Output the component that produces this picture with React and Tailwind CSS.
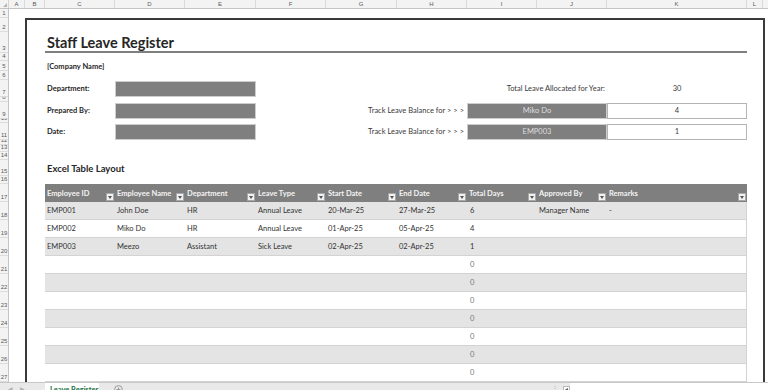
import React from "react";

const GRID = "grid grid-cols-[18px_70px_70px_71px_70px_71px_70px_70px_70px_140px_16px]";
const TGRID = "grid grid-cols-[70px_70px_71px_70px_71px_70px_70px_70px_140px]";

const colHeads = [
  ["A", "w-[16px]"],
  ["B", "w-[20px]"],
  ["C", "w-[70px]"],
  ["D", "w-[70px]"],
  ["E", "w-[71px]"],
  ["F", "w-[70px]"],
  ["G", "w-[71px]"],
  ["H", "w-[70px]"],
  ["I", "w-[70px]"],
  ["J", "w-[70px]"],
  ["K", "w-[140px]"],
  ["L", "w-[16px]"],
];

const rowHeads = [
  ["1", "h-[9px]"],
  ["2", "h-[14px]"],
  ["3", "h-[21px]"],
  ["4", "h-[8px]"],
  ["5", "h-[10px]"],
  ["6", "h-[9px]"],
  ["7", "h-[17px]"],
  ["8", "h-[5px]"],
  ["9", "h-[17px]"],
  ["10", "h-[4px]"],
  ["11", "h-[17px]"],
  ["12", "h-[5px]"],
  ["13", "h-[7px]"],
  ["14", "h-[8px]"],
  ["15", "h-[16px]"],
  ["16", "h-[8px]"],
  ["17", "h-[18px]"],
  ["18", "h-[18px]"],
  ["19", "h-[18px]"],
  ["20", "h-[18px]"],
  ["21", "h-[18px]"],
  ["22", "h-[18px]"],
  ["23", "h-[18px]"],
  ["24", "h-[18px]"],
  ["25", "h-[18px]"],
  ["26", "h-[18px]"],
  ["27", "h-[18px]"],
];

const headers = [
  "Employee ID",
  "Employee Name",
  "Department",
  "Leave Type",
  "Start Date",
  "End Date",
  "Total Days",
  "Approved By",
  "Remarks",
];

const data = [
  ["EMP001", "John Doe", "HR", "Annual Leave", "20-Mar-25", "27-Mar-25", "6", "Manager Name", "-"],
  ["EMP002", "Miko Do", "HR", "Annual Leave", "01-Apr-25", "05-Apr-25", "4", "", ""],
  ["EMP003", "Meezo", "Assistant", "Sick Leave", "02-Apr-25", "02-Apr-25", "1", "", ""],
  ["", "", "", "", "", "", "0", "", ""],
  ["", "", "", "", "", "", "0", "", ""],
  ["", "", "", "", "", "", "0", "", ""],
  ["", "", "", "", "", "", "0", "", ""],
  ["", "", "", "", "", "", "0", "", ""],
  ["", "", "", "", "", "", "0", "", ""],
  ["", "", "", "", "", "", "0", "", ""],
];

function FilterBtn() {
  return (
    <span className="self-end mb-[1px] mr-[1px] w-[8px] h-[8px] shrink-0 bg-[#f2f2f2] border border-[#a8a8a8] flex items-center justify-center">
      <svg width="4" height="3" viewBox="0 0 4 3">
        <path d="M0 0H4L2 3Z" fill="#555" />
      </svg>
    </span>
  );
}

function GrayBox({ children }) {
  return (
    <div className="mt-[1px] h-[16px] bg-[#7f7f7f] border border-[#cdcdcd] flex items-center justify-center text-[7.5px] leading-[10px] text-[#dedede]">
      {children}
    </div>
  );
}

export default function App() {
  return (
    <div className="w-[768px] h-[390px] overflow-hidden bg-white font-[Lato,sans-serif] text-[#262626] flex flex-col">
      {/* Column header */}
      <div className="h-[9px] shrink-0 flex bg-[#f3f3f3] border-b border-[#c4c4c4] font-['Liberation_Sans',sans-serif] text-[6px] leading-[8px] text-[#5a5a5a]">
        <div className="w-[9px] shrink-0 border-r border-[#d4d4d4] flex items-end justify-end pr-[1px] pb-[1px]">
          <svg width="4" height="4" viewBox="0 0 4 4">
            <path d="M4 0V4H0Z" fill="#b5b5b5" />
          </svg>
        </div>
        {colHeads.map(([l, w]) => (
          <div key={l} className={`${w} shrink-0 border-r border-[#dadada] flex items-center justify-center`}>
            {l}
          </div>
        ))}
        <div className="flex-1" />
      </div>

      {/* Body */}
      <div className="flex shrink-0 h-[373px] overflow-hidden">
        {/* Row header */}
        <div className="w-[9px] shrink-0 bg-[#f3f3f3] border-r border-[#c4c4c4] flex flex-col font-['Liberation_Sans',sans-serif] text-[6px] leading-[7px] text-[#5a5a5a]">
          {rowHeads.map(([l, h]) => (
            <div key={l} className={`${h} shrink-0 border-b border-[#dcdcdc] flex items-end justify-center overflow-hidden`}>
              {l}
            </div>
          ))}
        </div>

        {/* Sheet */}
        <div className="flex-1 flex flex-col">
          <div className="h-[9px] shrink-0" />
          <div className="flex">
            <div className="w-[16px] shrink-0" />
            <div className="w-[740px] shrink-0 border-t-2 border-x-2 border-[#3a3a3a] flex flex-col">
              {/* row 2 */}
              <div className="h-[12px] shrink-0" />
              {/* row 3 title */}
              <div className={`${GRID} h-[21px] shrink-0`}>
                <div className="col-start-2 col-span-9 border-b-2 border-[#7f7f7f] flex items-end pl-[2px] pb-[1px]">
                  <span className="text-[14.5px] leading-[15px] font-bold text-[#262626]">Staff Leave Register</span>
                </div>
              </div>
              {/* row 4 */}
              <div className="h-[8px] shrink-0" />
              {/* row 5 */}
              <div className={`${GRID} h-[10px] shrink-0`}>
                <div className="col-start-2 col-span-3 flex items-end pl-[2px]">
                  <span className="text-[7.5px] leading-[9px] font-bold">[Company Name]</span>
                </div>
              </div>
              {/* row 6 */}
              <div className="h-[9px] shrink-0" />
              {/* row 7 */}
              <div className={`${GRID} h-[17px] shrink-0 text-[7.5px] leading-[10px]`}>
                <div className="col-start-2 flex items-center pl-[2px] pt-[1px] font-bold">Department:</div>
                <div className="col-start-3 col-span-2">
                  <GrayBox />
                </div>
                <div className="col-start-8 col-span-2 flex items-center justify-end pr-[2px] pt-[1px] text-[#3a3a3a]">
                  Total Leave Allocated for Year:
                </div>
                <div className="col-start-10 flex items-center justify-center pt-[1px] text-[#3a3a3a]">30</div>
              </div>
              {/* row 8 */}
              <div className="h-[5px] shrink-0" />
              {/* row 9 */}
              <div className={`${GRID} h-[17px] shrink-0 text-[7.5px] leading-[10px]`}>
                <div className="col-start-2 flex items-center pl-[2px] pt-[1px] font-bold">Prepared By:</div>
                <div className="col-start-3 col-span-2">
                  <GrayBox />
                </div>
                <div className="col-start-6 col-span-2 flex items-center justify-end pr-[3px] pt-[1px] text-[#3a3a3a]">
                  Track Leave Balance for &gt; &gt; &gt;
                </div>
                <div className="col-start-8 col-span-2">
                  <GrayBox>Miko Do</GrayBox>
                </div>
                <div className="col-start-10">
                  <div className="mt-[1px] h-[16px] bg-white border border-[#b4b4b4] flex items-center justify-center text-[#3a3a3a]">
                    4
                  </div>
                </div>
              </div>
              {/* row 10 */}
              <div className="h-[4px] shrink-0" />
              {/* row 11 */}
              <div className={`${GRID} h-[17px] shrink-0 text-[7.5px] leading-[10px]`}>
                <div className="col-start-2 flex items-center pl-[2px] pt-[1px] font-bold">Date:</div>
                <div className="col-start-3 col-span-2">
                  <GrayBox />
                </div>
                <div className="col-start-6 col-span-2 flex items-center justify-end pr-[3px] pt-[1px] text-[#3a3a3a]">
                  Track Leave Balance for &gt; &gt; &gt;
                </div>
                <div className="col-start-8 col-span-2">
                  <GrayBox>EMP003</GrayBox>
                </div>
                <div className="col-start-10">
                  <div className="mt-[1px] h-[16px] bg-white border border-[#b4b4b4] flex items-center justify-center text-[#3a3a3a]">
                    1
                  </div>
                </div>
              </div>
              {/* rows 12-14 */}
              <div className="h-[20px] shrink-0" />
              {/* row 15 */}
              <div className={`${GRID} h-[16px] shrink-0`}>
                <div className="col-start-2 col-span-3 flex items-center pl-[2px] pt-[2px]">
                  <span className="text-[9.5px] leading-[12px] font-bold">Excel Table Layout</span>
                </div>
              </div>
              {/* row 16 */}
              <div className="h-[8px] shrink-0" />
              {/* table header row 17 */}
              <div className={`${GRID} h-[18px] shrink-0`}>
                <div className={`col-start-2 col-span-9 ${TGRID} bg-[#7f7f7f]`}>
                  {headers.map((h) => (
                    <div key={h} className="flex justify-between min-w-0">
                      <span className="self-center pl-[2px] pt-[1px] text-[7.5px] leading-[10px] font-bold text-[#f4f4f4] whitespace-nowrap">
                        {h}
                      </span>
                      <FilterBtn />
                    </div>
                  ))}
                </div>
              </div>
              {/* data rows */}
              {data.map((r, i) => (
                <div key={i} className={`${GRID} h-[18px] shrink-0`}>
                  <div
                    className={`col-start-2 col-span-9 ${TGRID} border-b border-r border-[#d3d3d3] ${
                      i % 2 === 0 ? "bg-[#e4e4e4]" : "bg-white"
                    }`}
                  >
                    {r.map((c, j) => (
                      <div
                        key={j}
                        className={`flex items-center whitespace-nowrap text-[7.5px] leading-[10px] ${
                          j === 6 ? "pl-[3px]" : "pl-[2px]"
                        } ${c === "0" ? "text-[#7a7a7a]" : "text-[#333333]"}`}
                      >
                        {c}
                      </div>
                    ))}
                  </div>
                </div>
              ))}
            </div>
          </div>
        </div>
      </div>

      {/* Sheet tab bar */}
      <div className="h-[30px] shrink-0 flex items-start bg-[#e9e9e9] border-t border-[#c8c8c8] font-['Liberation_Sans',sans-serif]">
        <div className="w-[45px] shrink-0 flex gap-[7px] pl-[8px] pt-[2px] text-[6px] leading-[8px] text-[#b3b3b3]">
          <span>◀</span>
          <span>▶</span>
        </div>
        <div className="w-[54px] h-full shrink-0 bg-white pl-[5px] pt-[2px] whitespace-nowrap overflow-hidden font-[Lato,sans-serif] text-[7.5px] leading-[10px] font-bold text-[#217346]">
          Leave Register
        </div>
        <div className="ml-[15px] mt-[2px] shrink-0">
          <svg width="9" height="9" viewBox="0 0 10 10">
            <circle cx="5" cy="5" r="4.3" fill="none" stroke="#8a8a8a" strokeWidth="0.9" />
            <path d="M5 2.8V7.2M2.8 5H7.2" stroke="#8a8a8a" strokeWidth="0.9" />
          </svg>
        </div>
        <div className="w-[429px] shrink-0" />
        <div className="w-[4px] shrink-0 pt-[1px] text-[6px] leading-[8px] text-[#9a9a9a]">⋮</div>
        <div className="w-[7px] shrink-0" />
        <div className="mt-[3px] w-[7px] h-[7px] shrink-0 bg-white border border-[#b8b8b8] flex items-center justify-center">
          <svg width="3" height="3" viewBox="0 0 3 3">
            <path d="M3 0V3L0 1.5Z" fill="#666" />
          </svg>
        </div>
        <div className="flex-1 h-full bg-white" />
      </div>
    </div>
  );
}
